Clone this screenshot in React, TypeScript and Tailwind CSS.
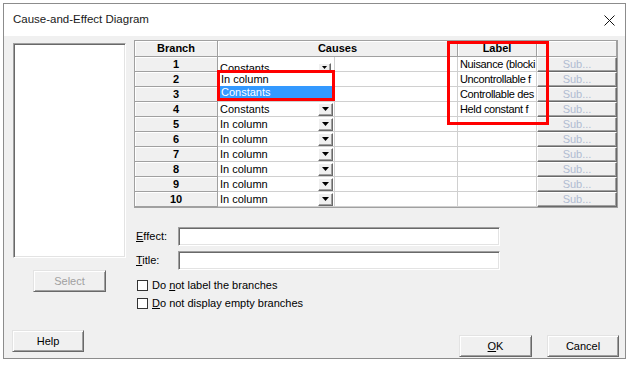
import React from "react";

const FONT = "font-['Liberation_Sans',Arial,sans-serif]";

const rows = [
  { n: 1, cause: "Constants", label: "Nuisance (blocki" },
  { n: 2, cause: "In column", label: "Uncontrollable f" },
  { n: 3, cause: "In column", label: "Controllable des" },
  { n: 4, cause: "Constants", label: "Held constant f" },
  { n: 5, cause: "In column", label: "" },
  { n: 6, cause: "In column", label: "" },
  { n: 7, cause: "In column", label: "" },
  { n: 8, cause: "In column", label: "" },
  { n: 9, cause: "In column", label: "" },
  { n: 10, cause: "In column", label: "" },
];

const raised =
  "bg-[#f0f0f0] border border-t-[#e3e3e3] border-l-[#e3e3e3] border-r-[#696969] border-b-[#696969] shadow-[inset_1px_1px_0_#ffffff,inset_-1px_-1px_0_#a0a0a0]";
const sunken =
  "bg-white border border-t-[#a0a0a0] border-l-[#a0a0a0] border-r-white border-b-white shadow-[inset_1px_1px_0_#696969,inset_-1px_-1px_0_#e3e3e3]";
const hdr =
  "bg-[#f0f0f0] border-r border-b border-r-[#a0a0a0] border-b-[#a0a0a0] shadow-[inset_1px_1px_0_#ffffff] flex items-center justify-center font-bold text-[11px]";
const cell = "bg-white border-r border-b border-[#d0d0d0]";

function Arrow({ small }: { small?: boolean }) {
  return small ? (
    <svg width="5" height="3" viewBox="0 0 5 3">
      <polygon points="0,0 5,0 2.5,3" fill="#000" />
    </svg>
  ) : (
    <svg width="7" height="4" viewBox="0 0 7 4">
      <polygon points="0,0 7,0 3.5,4" fill="#000" />
    </svg>
  );
}

function DropBtn({ small }: { small?: boolean }) {
  return (
    <div
      className={`${small ? "w-[13px] h-[12px] items-start pt-[2px]" : "w-[15px] h-[13px] items-center"} flex justify-center bg-[#f0f0f0] border border-t-white border-l-white border-r-[#696969] border-b-[#696969] shadow-[inset_-1px_-1px_0_#a0a0a0]`}
    >
      <Arrow small={small} />
    </div>
  );
}

function Btn({
  children,
  w,
  disabled,
  className = "",
}: {
  children: React.ReactNode;
  w: string;
  disabled?: boolean;
  className?: string;
}) {
  return (
    <div
      className={`${raised} ${w} h-[22px] flex items-center justify-center text-[11px] ${
        disabled ? "text-[#a0a0a0]" : "text-black"
      } ${className}`}
    >
      {children}
    </div>
  );
}

export default function App() {
  return (
    <div className={`w-[632px] h-[366px] bg-white pt-[3px] pl-[3px] overflow-hidden text-black ${FONT}`}>
      <div className="w-[623px] h-[356px] border border-[#8c8c8c] flex flex-col bg-[#f0f0f0]">
        {/* title bar */}
        <div className="h-[32px] bg-white flex items-center justify-between pl-[9px] pr-[10px]">
          <span className="text-[11.5px] text-[#1a1a1a]">Cause-and-Effect Diagram</span>
          <svg width="11" height="11" viewBox="0 0 11 11">
            <line x1="0.5" y1="0.5" x2="10.5" y2="10.5" stroke="#111" strokeWidth="1" />
            <line x1="10.5" y1="0.5" x2="0.5" y2="10.5" stroke="#111" strokeWidth="1" />
          </svg>
        </div>

        {/* body */}
        <div className="flex-1 flex flex-col justify-between pb-[1px]">
          <div className="flex pt-[4px]">
            {/* left column */}
            <div className="ml-[9px] mt-[3px] w-[113px] flex flex-col items-center">
              <div className={`${sunken} w-[113px] h-[215px]`} />
              <Btn w="w-[73px]" disabled className="mt-[12px]">
                Select
              </Btn>
            </div>

            {/* right column */}
            <div className="ml-[8px] flex flex-col">
              <div className="relative w-[484px]">
                <div className="border border-[#a0a0a0] bg-[#f0f0f0] grid grid-cols-[83px_117px_123px_79px_80px] grid-rows-[16px_repeat(10,15px)] text-[11px]">
                  <div className={hdr}>Branch</div>
                  <div className={`${hdr} col-span-2`}>Causes</div>
                  <div className={hdr}>Label</div>
                  <div className={hdr}></div>
                  {rows.map((r) => (
                    <React.Fragment key={r.n}>
                      <div className={hdr}>{r.n}</div>
                      {r.n === 1 ? (
                        <div className={`${cell} flex items-start justify-between pl-[2px] pr-[3px] pt-[5px] overflow-hidden`}>
                          <span className="leading-[13px] whitespace-nowrap">{r.cause}</span>
                          <div className="mt-[1px]">
                            <DropBtn small />
                          </div>
                        </div>
                      ) : (
                        <div className={`${cell} flex items-center justify-between pl-[2px] pr-[1px] overflow-hidden`}>
                          <span className="leading-[13px] whitespace-nowrap">{r.cause}</span>
                          <DropBtn />
                        </div>
                      )}
                      <div className={cell} />
                      <div className={`${cell} flex items-center pl-[2px] overflow-hidden`}>
                        <span className="whitespace-nowrap leading-[13px] tracking-[-0.35px]">{r.label}</span>
                      </div>
                      <div className="bg-[#f0f0f0] border border-t-white border-l-white border-r-[#696969] border-b-[#696969] shadow-[inset_-1px_-1px_0_#a0a0a0] flex items-center justify-center text-[#b0bcd2] text-[11px]">
                        Sub...
                      </div>
                    </React.Fragment>
                  ))}
                </div>

                {/* open dropdown list */}
                <div className="absolute left-[83px] top-[30px] w-[118px] h-[31px] border-[3px] border-[#ff0000] bg-white flex flex-col text-[11px]">
                  <div className="h-[13px] leading-[13px] pl-[1px] text-black">In column</div>
                  <div className="h-[12px] leading-[12px] pl-[1px] bg-[#3399ff] text-white">Constants</div>
                </div>

                {/* label highlight box */}
                <div className="absolute left-[313px] top-[1px] w-[102px] h-[84px] border-[3px] border-[#ff0000]" />
              </div>

              {/* Effect */}
              <div className="flex items-center mt-[19px] text-[11px]">
                <div className="w-[44px] pl-[2px]">
                  <span className="underline">E</span>ffect:
                </div>
                <div className={`${sunken} w-[322px] h-[19px]`} />
              </div>
              {/* Title */}
              <div className="flex items-center mt-[5px] text-[11px]">
                <div className="w-[44px] pl-[2px]">
                  <span className="underline">T</span>itle:
                </div>
                <div className={`${sunken} w-[322px] h-[19px]`} />
              </div>

              {/* checkboxes */}
              <div className="flex items-center mt-[9px] h-[13px] text-[11px] ml-[3px] gap-[4px]">
                <div className="w-[11px] h-[11px] bg-white border border-[#333333]" />
                <span>
                  Do <span className="underline">n</span>ot label the branches
                </span>
              </div>
              <div className="flex items-center mt-[5px] h-[13px] text-[11px] ml-[3px] gap-[4px]">
                <div className="w-[11px] h-[11px] bg-white border border-[#333333]" />
                <span>
                  <span className="underline">D</span>o not display empty branches
                </span>
              </div>
            </div>
          </div>

          {/* bottom buttons */}
          <div className="flex justify-between items-end pl-[8px] pr-[6px]">
            <Btn w="w-[72px]" className="mb-[5px]">
              Help
            </Btn>
            <div className="flex gap-[15px]">
              <Btn w="w-[73px]">
                <span className="underline">O</span>K
              </Btn>
              <Btn w="w-[72px]">Cancel</Btn>
            </div>
          </div>
        </div>
      </div>
    </div>
  );
}
